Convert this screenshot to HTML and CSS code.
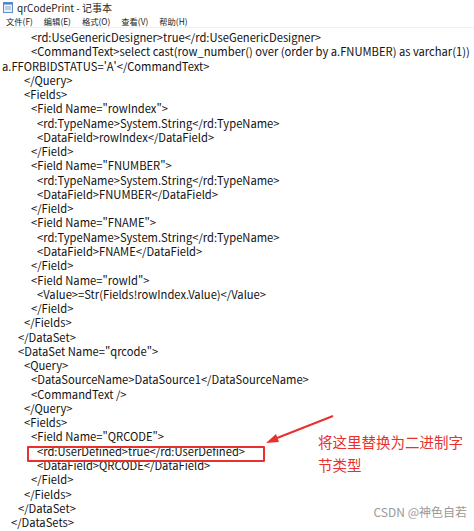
FILE: index.html
```html
<!DOCTYPE html>
<html lang="zh-CN">
<head>
    <meta charset="UTF-8">
    <meta name="viewport" content="width=device-width, initial-scale=1.0">
    <title>qrCodePrint - 记事本</title>
    <link rel="stylesheet" href="styles.css">
</head>
<body>
    <div class="window">
        <div class="titlebar">
            <svg class="app-icon" width="10" height="11" viewBox="0 0 10 11">
                <rect x="0.5" y="0.5" width="9" height="10" fill="#e8f1fb" stroke="#5b8fc9"/>
                <rect x="0.5" y="0.5" width="9" height="2" fill="#4a86c8"/>
                <line x1="2" y1="5" x2="8" y2="5" stroke="#9ab"/>
                <line x1="2" y1="7" x2="8" y2="7" stroke="#9ab"/>
            </svg>
            <span class="title">qrCodePrint - 记事本</span>
        </div>

        <div class="menubar">
            <span>文件(F)</span>
            <span>编辑(E)</span>
            <span>格式(O)</span>
            <span>查看(V)</span>
            <span>帮助(H)</span>
        </div>

        <div class="editor">
            <div class="line i3">&lt;rd:UseGenericDesigner&gt;true&lt;/rd:UseGenericDesigner&gt;</div>
            <div class="line i3">&lt;CommandText&gt;select cast(row_number() over (order by a.FNUMBER) as varchar(1))</div>
            <div class="line wrap">a.FFORBIDSTATUS='A'&lt;/CommandText&gt;</div>
            <div class="line i2">&lt;/Query&gt;</div>
            <div class="line i2">&lt;Fields&gt;</div>
            <div class="line i3">&lt;Field Name="rowIndex"&gt;</div>
            <div class="line i4">&lt;rd:TypeName&gt;System.String&lt;/rd:TypeName&gt;</div>
            <div class="line i4">&lt;DataField&gt;rowIndex&lt;/DataField&gt;</div>
            <div class="line i3">&lt;/Field&gt;</div>
            <div class="line i3">&lt;Field Name="FNUMBER"&gt;</div>
            <div class="line i4">&lt;rd:TypeName&gt;System.String&lt;/rd:TypeName&gt;</div>
            <div class="line i4">&lt;DataField&gt;FNUMBER&lt;/DataField&gt;</div>
            <div class="line i3">&lt;/Field&gt;</div>
            <div class="line i3">&lt;Field Name="FNAME"&gt;</div>
            <div class="line i4">&lt;rd:TypeName&gt;System.String&lt;/rd:TypeName&gt;</div>
            <div class="line i4">&lt;DataField&gt;FNAME&lt;/DataField&gt;</div>
            <div class="line i3">&lt;/Field&gt;</div>
            <div class="line i3">&lt;Field Name="rowId"&gt;</div>
            <div class="line i4">&lt;Value&gt;=Str(Fields!rowIndex.Value)&lt;/Value&gt;</div>
            <div class="line i3">&lt;/Field&gt;</div>
            <div class="line i2">&lt;/Fields&gt;</div>
            <div class="line i1">&lt;/DataSet&gt;</div>
            <div class="line i1">&lt;DataSet Name="qrcode"&gt;</div>
            <div class="line i2">&lt;Query&gt;</div>
            <div class="line i3">&lt;DataSourceName&gt;DataSource1&lt;/DataSourceName&gt;</div>
            <div class="line i3">&lt;CommandText /&gt;</div>
            <div class="line i2">&lt;/Query&gt;</div>
            <div class="line i2">&lt;Fields&gt;</div>
            <div class="line i3">&lt;Field Name="QRCODE"&gt;</div>
            <div class="line i4">&lt;rd:UserDefined&gt;true&lt;/rd:UserDefined&gt;</div>
            <div class="line i4">&lt;DataField&gt;QRCODE&lt;/DataField&gt;</div>
            <div class="line i3">&lt;/Field&gt;</div>
            <div class="line i2">&lt;/Fields&gt;</div>
            <div class="line i1">&lt;/DataSet&gt;</div>
            <div class="line i0">&lt;/DataSets&gt;</div>
        </div>

        <!-- annotation drawn over the screenshot -->
        <div class="highlight"></div>
        <svg class="arrow" width="474" height="531" viewBox="0 0 474 531">
            <line x1="333" y1="416" x2="272" y2="440" stroke="#e8302e" stroke-width="2"/>
            <polygon points="266,443 276,434 279,442" fill="#e8302e"/>
        </svg>
        <div class="note">将这里替换为二进制字<br>节类型</div>
        <div class="watermark">CSDN @神色自若</div>
    </div>
</body>
</html>
```

FILE: styles.css
```css
body {
    margin: 0;
    background-color: #fff;
    font-family: "Noto Sans CJK SC", "Noto Sans", sans-serif;
    color: #000;
}
.window {
    position: relative;
    width: 474px;
    height: 531px;
    overflow: hidden;
    background-color: #fff;
}
.titlebar {
    height: 14px;
    display: flex;
    align-items: center;
    padding-left: 3px;
    gap: 4px;
}
.title {
    font-size: 10px;
    color: #222;
}
.menubar {
    height: 13px;
    display: flex;
    align-items: center;
    padding-left: 6px;
    gap: 11px;
    font-size: 8.3px;
    color: #222;
    border-bottom: 1px solid #f0f0f0;
}
.editor {
    padding-top: 2px;
    font-size: 11.2px;
    line-height: 14.27px;
    white-space: nowrap;
    color: #111;
}
.line {
    padding-left: 2px;
}
.i0 { padding-left: 11px; }
.i1 { padding-left: 18px; }
.i2 { padding-left: 24px; }
.i3 { padding-left: 31px; }
.i4 { padding-left: 37px; }
.highlight {
    position: absolute;
    left: 27px;
    top: 446px;
    width: 234px;
    height: 12px;
    border: 2px solid #e8302e;
    border-radius: 1px;
}
.arrow {
    position: absolute;
    left: 0;
    top: 0;
}
.note {
    position: absolute;
    left: 318px;
    top: 430px;
    font-size: 14.5px;
    line-height: 23px;
    color: #e8302e;
}
.watermark {
    position: absolute;
    right: 7px;
    top: 503px;
    font-size: 12px;
    color: #9a9a9a;
}
```
